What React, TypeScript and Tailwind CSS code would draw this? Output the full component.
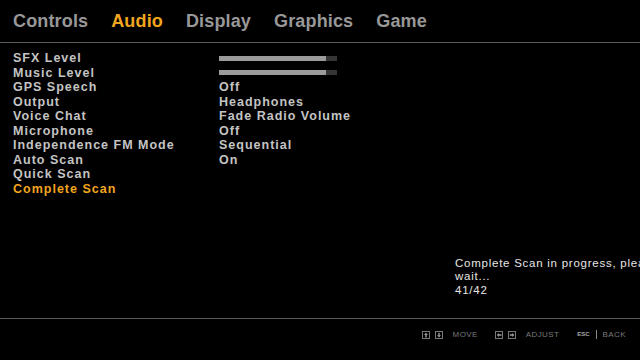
import React from 'react';

type Row = { label: string; value?: string; bar?: boolean; active?: boolean };

const rows: Row[] = [
  { label: 'SFX Level', bar: true },
  { label: 'Music Level', bar: true },
  { label: 'GPS Speech', value: 'Off' },
  { label: 'Output', value: 'Headphones' },
  { label: 'Voice Chat', value: 'Fade Radio Volume' },
  { label: 'Microphone', value: 'Off' },
  { label: 'Independence FM Mode', value: 'Sequential' },
  { label: 'Auto Scan', value: 'On' },
  { label: 'Quick Scan' },
  { label: 'Complete Scan', active: true },
];

const tabs = ['Controls', 'Audio', 'Display', 'Graphics', 'Game'];

function KeyIcon({ dir }: { dir: 'up' | 'down' | 'left' | 'right' }) {
  const arrows: Record<string, string> = {
    up: 'M4 1.8 L2 4 H3.3 V6.5 H4.7 V4 H6 Z',
    down: 'M4 6.5 L2 4.3 H3.3 V1.8 H4.7 V4.3 H6 Z',
    left: 'M1.8 4 L4 2 V3.3 H6.5 V4.7 H4 V6 Z',
    right: 'M6.5 4 L4.3 2 V3.3 H1.8 V4.7 H4.3 V6 Z',
  };
  return (
    <svg width="8" height="8" viewBox="0 0 8 8" className="block">
      <rect x="0.5" y="0.5" width="7" height="7" fill="none" stroke="#777" strokeWidth="1" />
      <path d={arrows[dir]} fill="#9a9a9a" />
    </svg>
  );
}

export default function App() {
  return (
    <div className="w-[640px] h-[360px] bg-black overflow-hidden flex flex-col font-['Liberation_Sans',Arial,sans-serif]">
      <div className="h-[42px] flex items-center gap-[23px] pl-[13px] text-[18px] font-bold tracking-[0.15px]">
        {tabs.map((t) => (
          <span key={t} className={t === 'Audio' ? 'text-[#f2a51f]' : 'text-[#989898]'}>
            {t}
          </span>
        ))}
      </div>
      <div className="h-px bg-[#5a5a5a]" />

      <div className="flex-1 flex flex-col">
        <div className="pt-[8px] pl-[13px] text-[12.5px] font-bold tracking-[1px] leading-[14.5px]">
          {rows.map((r) => (
            <div key={r.label} className="flex h-[14.5px] items-center">
              <div className={`w-[206px] ${r.active ? 'text-[#f2a51f]' : 'text-[#c4c4c4]'}`}>{r.label}</div>
              {r.bar ? (
                <div className="flex h-[5px] w-[118px]">
                  <div className="w-[107px] bg-[#9c9c9c]" />
                  <div className="flex-1 bg-[#353535]" />
                </div>
              ) : (
                <div className="text-[#c4c4c4]">{r.value}</div>
              )}
            </div>
          ))}
        </div>

        <div className="mt-auto pb-[21px] pl-[455px] text-[11.5px] tracking-[0.75px] leading-[13.5px] text-[#e6e6e6] whitespace-nowrap">
          <div>Complete Scan in progress, please</div>
          <div>wait...</div>
          <div>41/42</div>
        </div>
      </div>

      <div className="h-px bg-[#5a5a5a]" />
      <div className="h-[41px] flex items-start justify-end pt-[11px] pr-[14px] text-[8px] tracking-[0.4px] text-[#7a7a7a]">
        <div className="flex items-center h-[9px]">
          <KeyIcon dir="up" />
          <span className="w-[5px]" />
          <KeyIcon dir="down" />
          <span className="ml-[10px]">MOVE</span>
          <span className="w-[17px]" />
          <KeyIcon dir="left" />
          <span className="w-[5px]" />
          <KeyIcon dir="right" />
          <span className="ml-[10px]">ADJUST</span>
          <span className="w-[18px]" />
          <span className="text-[6px] font-bold text-[#a8a8a8] tracking-normal">ESC</span>
          <span className="ml-[6px] w-px h-[9px] bg-[#8a8a8a]" />
          <span className="ml-[6px]">BACK</span>
        </div>
      </div>
    </div>
  );
}
